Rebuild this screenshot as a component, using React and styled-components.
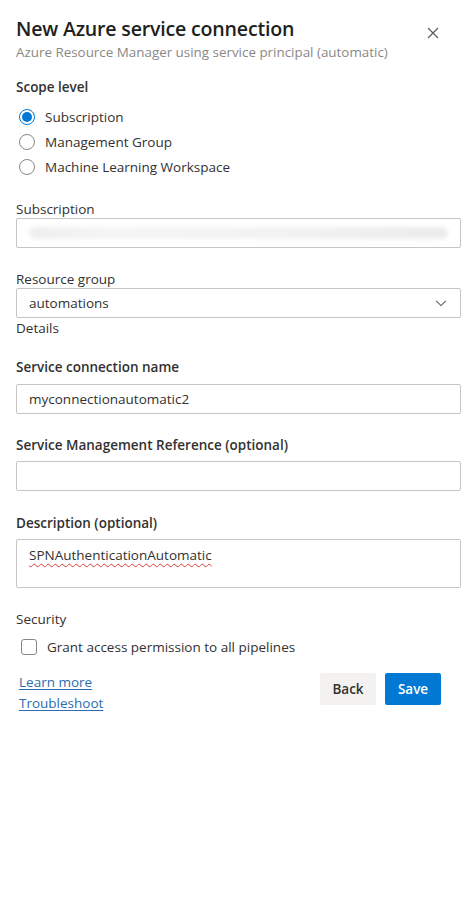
import React from 'react'
import styled, { createGlobalStyle } from 'styled-components'

const Global = createGlobalStyle`
  body {
    margin: 0;
    background: #fff;
    font-family: "Open Sans", "Noto Sans", sans-serif;
    color: #323130;
  }
`

const Panel = styled.div`
  width: 474px;
  height: 917px;
  box-sizing: border-box;
  padding: 14px 14px 0 16px;
  display: flex;
  flex-direction: column;
`

const Header = styled.div`
  display: flex;
  justify-content: space-between;
  align-items: flex-start;
`

const Title = styled.h1`
  margin: 0;
  font-size: 19.6px;
  font-weight: 600;
  line-height: 29px;
  color: #201f1e;
  letter-spacing: -0.2px;
`

const Subtitle = styled.div`
  font-size: 13.4px;
  line-height: 18px;
  color: #8a8886;
`

const CloseButton = styled.button`
  border: none;
  background: none;
  padding: 0;
  margin: 12px 20px 0 0;
  width: 14px;
  height: 14px;
  display: flex;
  svg { display: block; }
`

const Section = styled.div`
  margin-top: ${p => p.$top || 0}px;
`

const Heading = styled.div`
  font-size: 13.5px;
  font-weight: 600;
  line-height: 20px;
  color: #323130;
`

const Label = styled.div`
  font-size: 13.5px;
  line-height: 20px;
  color: #323130;
`

const RadioList = styled.div`
  display: flex;
  flex-direction: column;
  gap: 5px;
  margin-top: 10px;
`

const RadioRow = styled.div`
  display: flex;
  align-items: center;
  gap: 10px;
  padding-left: 3px;
  font-size: 13.5px;
  line-height: 20px;
`

const Radio = styled.span`
  width: 16px;
  height: 16px;
  box-sizing: border-box;
  border-radius: 50%;
  border: 1px solid ${p => (p.$on ? '#0078d4' : '#8a8886')};
  display: flex;
  align-items: center;
  justify-content: center;
  &::after {
    content: '';
    width: 10px;
    height: 10px;
    border-radius: 50%;
    background: ${p => (p.$on ? '#0078d4' : 'transparent')};
  }
`

const Field = styled.div`
  box-sizing: border-box;
  width: 445px;
  height: ${p => p.$h || 30}px;
  border: 1px solid #c8c6c4;
  border-radius: 2px;
  margin-top: ${p => p.$gap ?? -1}px;
  padding: ${p => (p.$area ? '6px 12px' : '0 12px')};
  display: flex;
  align-items: ${p => (p.$area ? 'flex-start' : 'center')};
  justify-content: space-between;
  font-size: 13.5px;
  color: #323130;
`

const Blur = styled.div`
  width: 100%;
  height: 12px;
  border-radius: 6px;
  background: linear-gradient(90deg, #efeeee 0%, #f6f5f5 20%, #f3f2f2 60%, #ececec 95%);
  filter: blur(2px);
`

const Squiggle = styled.span`
  text-decoration: underline wavy #e03b3b;
  text-decoration-thickness: 1px;
  text-underline-offset: 3px;
`

const CheckRow = styled.div`
  display: flex;
  align-items: center;
  gap: 10px;
  margin-top: 8px;
  padding-left: 5px;
  font-size: 13.5px;
  line-height: 20px;
`

const Box = styled.span`
  width: 16px;
  height: 16px;
  box-sizing: border-box;
  border: 1px solid #8a8886;
  border-radius: 3px;
`

const Footer = styled.div`
  display: flex;
  justify-content: space-between;
  margin-top: 16px;
  padding-right: 19px;
`

const Links = styled.div`
  display: flex;
  flex-direction: column;
  padding-left: 3px;
  margin-top: -1px;
`

const Link = styled.a`
  font-size: 13.5px;
  line-height: 21px;
  color: #2b6cb0;
  text-decoration: underline;
  text-underline-offset: 2px;
`

const Buttons = styled.div`
  display: flex;
  gap: 9px;
`

const Button = styled.button`
  width: 56px;
  height: 32px;
  border: none;
  border-radius: 2px;
  font-family: inherit;
  font-size: 13.5px;
  font-weight: 600;
  background: ${p => (p.$primary ? '#0078d4' : '#f3f2f1')};
  color: ${p => (p.$primary ? '#fff' : '#323130')};
`

const Chevron = () => (
  <svg width="14" height="14" viewBox="0 0 16 16" fill="none" stroke="#605e5c" strokeWidth="1.2">
    <polyline points="2.5 5.5 8 11 13.5 5.5" />
  </svg>
)

export default function App() {
  return (
    <>
      <Global />
      <Panel>
        <Header>
          <div>
            <Title>New Azure service connection</Title>
            <Subtitle>Azure Resource Manager using service principal (automatic)</Subtitle>
          </div>
          <CloseButton aria-label="Close">
            <svg width="14" height="14" viewBox="0 0 14 14" stroke="#605e5c" strokeWidth="1.3">
              <line x1="2" y1="2" x2="12" y2="12" />
              <line x1="12" y1="2" x2="2" y2="12" />
            </svg>
          </CloseButton>
        </Header>

        <Section $top={16}>
          <Heading>Scope level</Heading>
          <RadioList>
            <RadioRow><Radio $on />Subscription</RadioRow>
            <RadioRow><Radio />Management Group</RadioRow>
            <RadioRow><Radio />Machine Learning Workspace</RadioRow>
          </RadioList>
        </Section>

        <Section $top={22}>
          <Label>Subscription</Label>
          <Field><Blur /></Field>
        </Section>

        <Section $top={21}>
          <Label>Resource group</Label>
          <Field>automations<Chevron /></Field>
          <Label>Details</Label>
        </Section>

        <Section $top={19}>
          <Heading>Service connection name</Heading>
          <Field $gap={7}>myconnectionautomatic2</Field>
        </Section>

        <Section $top={21}>
          <Heading>Service Management Reference (optional)</Heading>
          <Field $gap={6} />
        </Section>

        <Section $top={22}>
          <Heading>Description (optional)</Heading>
          <Field $gap={6} $h={49} $area><Squiggle>SPNAuthenticationAutomatic</Squiggle></Field>
        </Section>

        <Section $top={21}>
          <Label>Security</Label>
          <CheckRow><Box />Grant access permission to all pipelines</CheckRow>
        </Section>

        <Footer>
          <Links>
            <Link href="#">Learn more</Link>
            <Link href="#">Troubleshoot</Link>
          </Links>
          <Buttons>
            <Button>Back</Button>
            <Button $primary>Save</Button>
          </Buttons>
        </Footer>
      </Panel>
    </>
  )
}
